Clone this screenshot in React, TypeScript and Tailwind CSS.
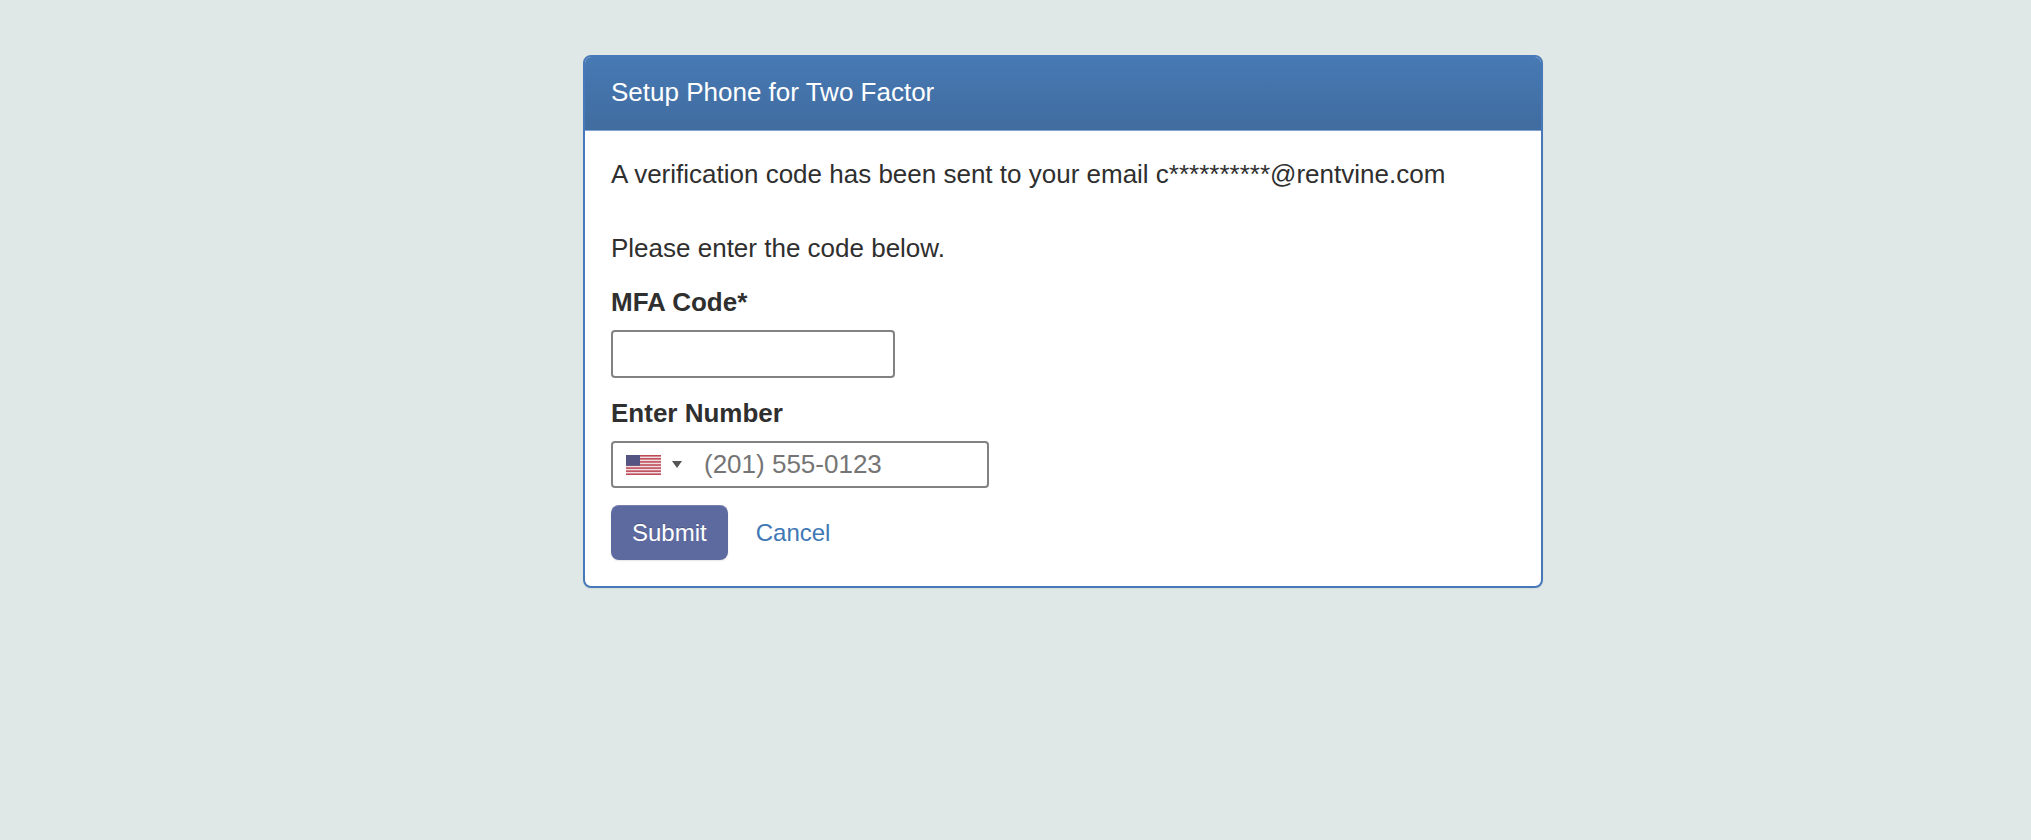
import type { ReactNode } from 'react'

interface FieldProps {
  id: string
  label: string
  children: ReactNode
}

function Field({ id, label, children }: FieldProps) {
  return (
    <div className="mb-[17px]">
      <label htmlFor={id} className="mb-[9px] block font-bold">
        {label}
      </label>
      {children}
    </div>
  )
}

function UsFlag() {
  const redStripes = [0, 2, 4, 6, 8, 10, 12]

  return (
    <svg width="35" height="20" viewBox="0 0 35 19.5" preserveAspectRatio="none" aria-hidden="true">
      <rect width="35" height="19.5" fill="#efdde1" />
      {redStripes.map((i) => (
        <rect key={i} y={i * 1.5} width="35" height="1.5" fill="#be4a55" />
      ))}
      <rect width="14" height="10.5" fill="#555584" />
    </svg>
  )
}

export default function App() {
  return (
    <div className="min-h-screen bg-[#dfe8e6] pt-[55px] pl-[95px] font-['Liberation_Sans',Arial,sans-serif] text-[26px] leading-[37px] text-[#2f2f2f]">
      <main className="mx-auto max-w-[960px] overflow-hidden rounded-lg border-2 border-[#4779b8] bg-white shadow-[0_1px_2px_rgba(0,0,0,0.06)]">
        {/* Header */}
        <div className="border-b border-[#7fa3d3] bg-linear-to-b from-[#4779b4] to-[#406c9f] px-[26px] pt-[17px] pb-[19px]">
          <h1 className="text-white">Setup Phone for Two Factor</h1>
        </div>

        <form className="px-[26px] pt-[25px] pb-[26px]" onSubmit={(e) => e.preventDefault()}>
          <p className="mb-[17px]">
            A verification code has been sent to your email c**********@rentvine.com
            <br />
            <br />
            Please enter the code below.
          </p>

          <Field id="mfa-code" label="MFA Code*">
            <input
              id="mfa-code"
              type="text"
              required
              className="block h-12 w-[284px] rounded border-2 border-[#828282] bg-white px-4 outline-none"
            />
          </Field>

          <Field id="phone" label="Enter Number">
            <div className="flex h-[47px] w-[378px] items-center rounded border-2 border-[#828282] bg-white">
              <button type="button" aria-label="United States" className="flex h-full items-center gap-[11px] pr-3 pl-[13px]">
                <UsFlag />
                <svg width="10" height="7" viewBox="0 0 10 7" aria-hidden="true">
                  <path d="M0 0h10L5 7z" fill="#555" />
                </svg>
              </button>
              <input
                id="phone"
                type="tel"
                placeholder="(201) 555-0123"
                className="h-full min-w-0 flex-1 bg-transparent pl-[10px] outline-none placeholder:text-[#757575]"
              />
            </div>
          </Field>

          {/* Actions */}
          <div className="flex items-center gap-7 text-2xl">
            <button
              type="submit"
              className="h-[55px] rounded-lg bg-[#5d6a9f] px-[21px] text-white shadow-[inset_0_1px_0_rgba(255,255,255,0.15),0_1px_2px_rgba(0,0,0,0.1)] text-shadow-[0_-1px_0_rgba(0,0,0,0.2)]"
            >
              Submit
            </button>
            <a href="#" className="text-[#4078b5]">
              Cancel
            </a>
          </div>
        </form>
      </main>
    </div>
  )
}
